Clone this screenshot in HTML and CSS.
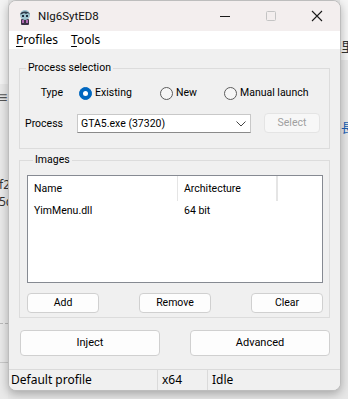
FILE: index.html
```html
<!DOCTYPE html>
<html>
<head>
<meta charset="utf-8">
<link rel="stylesheet" href="styles.css">
</head>
<body>
<div class="desktop">
  <div class="behind behind-left">
    <span class="bg-menu">≡</span>
    <span class="bg-text bg-f2">f2</span>
    <span class="bg-text bg-5c">5c</span>
    <span class="bg-dash"></span>
    <span class="bg-line"></span>
  </div>
  <div class="behind behind-right">
    <span class="bg-cjk bg-cjk1">里</span>
    <span class="bg-cjk bg-cjk2">長</span>
  </div>

  <div class="window">
    <div class="titlebar">
      <svg class="app-icon" width="16" height="16" viewBox="0 0 16 16">
        <rect x="4" y="10" width="8" height="6" rx="1" fill="#3b3346"/>
        <rect x="5" y="11" width="2" height="3" fill="#b06ab3"/>
        <rect x="9" y="11" width="2" height="3" fill="#b06ab3"/>
        <circle cx="8" cy="6" r="5" fill="#9ec4cf"/>
        <path d="M3.2 5.5 C3.5 1.5 12.5 1.5 12.8 5.5 L11 4 L9 5 L7 4 L5 5 Z" fill="#2e3a4a"/>
        <rect x="5" y="6" width="2" height="2" fill="#203040"/>
        <rect x="9" y="6" width="2" height="2" fill="#203040"/>
      </svg>
      <span class="title">NIg6SytED8</span>
      <div class="controls">
        <span class="ctl">
          <svg width="12" height="12" viewBox="0 0 12 12"><path d="M1 6.5 H11" stroke="#1a1a1a" stroke-width="1"/></svg>
        </span>
        <span class="ctl">
          <svg width="12" height="12" viewBox="0 0 12 12"><rect x="1.5" y="1.5" width="9" height="9" rx="1" fill="none" stroke="#c4c4c4" stroke-width="1"/></svg>
        </span>
        <span class="ctl">
          <svg width="12" height="12" viewBox="0 0 12 12"><path d="M1 1 L11 11 M11 1 L1 11" stroke="#1a1a1a" stroke-width="1.1"/></svg>
        </span>
      </div>
    </div>

    <div class="menubar">
      <span class="menu"><u>P</u>rofiles</span>
      <span class="menu"><u>T</u>ools</span>
    </div>

    <div class="client">
      <fieldset class="group group-process">
        <legend>Process selection</legend>
        <div class="type-row">
          <span class="label">Type</span>
          <span class="radio opt1"><span class="radio-dot checked"></span>Existing</span>
          <span class="radio opt2"><span class="radio-dot"></span>New</span>
          <span class="radio opt3"><span class="radio-dot"></span>Manual launch</span>
        </div>
        <div class="process-row">
          <span class="label">Process</span>
          <div class="combo">
            <span class="combo-text">GTA5.exe (37320)</span>
            <svg class="chevron" width="10" height="6" viewBox="0 0 10 6"><path d="M0.5 0.5 L5 5 L9.5 0.5" fill="none" stroke="#444" stroke-width="1"/></svg>
          </div>
          <span class="btn btn-disabled btn-select">Select</span>
        </div>
      </fieldset>

      <fieldset class="group group-images">
        <legend>Images</legend>
        <div class="listview">
          <div class="lv-header">
            <span class="col col-name">Name</span>
            <span class="col col-arch">Architecture</span>
            <span class="col col-rest"></span>
          </div>
          <div class="lv-row">
            <span class="col col-name">YimMenu.dll</span>
            <span class="col col-arch">64 bit</span>
          </div>
        </div>
        <div class="btn-row">
          <span class="btn btn-small">Add</span>
          <span class="btn btn-small">Remove</span>
          <span class="btn btn-small">Clear</span>
        </div>
      </fieldset>

      <div class="main-buttons">
        <span class="btn btn-large">Inject</span>
        <span class="btn btn-large">Advanced</span>
      </div>
    </div>

    <div class="statusbar">
      <span class="sb sb-profile">Default profile</span>
      <span class="sb sb-arch">x64</span>
      <span class="sb sb-state">Idle</span>
    </div>
  </div>
</div>
</body>
</html>
```

FILE: styles.css
```css
html, body {
  margin: 0;
  padding: 0;
}

body {
  background: #e4e4e4;
  font-family: "Noto Sans", "Open Sans", sans-serif;
  font-size: 12px;
  color: #000;
}

.desktop {
  position: relative;
  width: 348px;
  height: 399px;
  overflow: hidden;
  background: #e6e6e6;
}

/* ---- windows behind ---- */
.behind {
  position: absolute;
  top: 0;
  height: 399px;
}

.behind-left {
  left: 0;
  width: 8px;
  background: linear-gradient(#f3f3f3 0 84px, #e9e9e9 84px 100%);
}

.behind-right {
  left: 340px;
  width: 8px;
  background: linear-gradient(#f5f5f5 0 60px, #e7e7e7 60px 100%);
}

.bg-menu {
  position: absolute;
  left: -2px;
  top: 86px;
  font-size: 16px;
  color: #555;
}

.bg-text {
  position: absolute;
  left: -1px;
  font-size: 12px;
  color: #333;
}

.bg-f2 { top: 176px; }
.bg-5c { top: 193px; }

.bg-dash {
  position: absolute;
  left: 0;
  top: 323px;
  width: 8px;
  border-top: 1px dashed #b8b8b8;
}

.bg-line {
  position: absolute;
  left: 0;
  top: 362px;
  width: 8px;
  border-top: 1px solid #c8c8c8;
}

.bg-cjk {
  position: absolute;
  left: 1px;
  font-family: "Noto Sans CJK SC", sans-serif;
  font-size: 13px;
}

.bg-cjk1 { top: 36px; color: #333; }
.bg-cjk2 { top: 117px; color: #1a5fb4; }

/* ---- main window ---- */
.window {
  position: absolute;
  left: 8px;
  top: 0;
  width: 331px;
  height: 389px;
  border: 1px solid #bdbdbd;
  border-radius: 8px;
  overflow: hidden;
  background: #f0f0f0;
  box-shadow: 0 3px 10px rgba(0, 0, 0, 0.28);
  display: flex;
  flex-direction: column;
}

.titlebar {
  height: 30px;
  background: #f3eeee;
  display: flex;
  align-items: center;
  flex-shrink: 0;
}

.app-icon {
  margin-left: 8px;
  margin-top: 1px;
  flex-shrink: 0;
}

.title {
  margin-left: 5px;
  font-family: Roboto, "Noto Sans", sans-serif;
  font-size: 11.5px;
  line-height: 16px;
  color: #111;
}

.controls {
  margin-left: auto;
  display: flex;
  height: 30px;
}

.ctl {
  width: 46px;
  height: 30px;
  display: flex;
  align-items: center;
  justify-content: center;
}

.menubar {
  height: 18px;
  background: #ffffff;
  display: flex;
  align-items: center;
  flex-shrink: 0;
}

.menu {
  line-height: 16px;
  margin-left: 7px;
  padding-right: 6px;
}

.menu u {
  text-decoration-thickness: 1px;
  text-underline-offset: 2px;
}

.client {
  height: 320px;
  padding: 11px 9px 0 10px;
  box-sizing: border-box;
  flex-shrink: 0;
  font-family: Roboto, "Noto Sans", sans-serif;
  font-size: 10.5px;
  color: #000;
}

/* ---- group boxes ---- */
.group {
  margin: 0;
  padding: 0;
  min-width: 0;
  width: 311px;
  box-sizing: border-box;
  border: 1px solid #dcdcdc;
}

.group legend {
  margin-left: 6px;
  padding: 0 2px;
  line-height: 16px;
  font-size: 10.5px;
}

.group-process {
  padding-bottom: 15px;
}

.label {
  width: 43px;
  text-align: right;
  flex-shrink: 0;
}

.type-row {
  margin-top: 9px;
  height: 16px;
  display: flex;
  align-items: center;
  line-height: 16px;
}

.radio {
  display: flex;
  align-items: center;
  flex-shrink: 0;
}

.opt1 { margin-left: 16px; width: 81px; }
.opt2 { width: 64px; }

.radio-dot {
  width: 11px;
  height: 11px;
  border-radius: 50%;
  border: 1px solid #5c5c5c;
  background: #f6f6f6;
  margin-right: 3px;
  flex-shrink: 0;
  box-sizing: content-box;
  position: relative;
}

.radio-dot.checked {
  border-color: #0067c0;
  background: #0067c0;
}

.radio-dot.checked::after {
  content: "";
  position: absolute;
  left: 3px;
  top: 3px;
  width: 5px;
  height: 5px;
  border-radius: 50%;
  background: #fff;
}

.process-row {
  margin-top: 12px;
  height: 20px;
  display: flex;
  align-items: center;
}

.combo {
  margin-left: 14px;
  width: 174px;
  height: 19px;
  box-sizing: border-box;
  border: 1px solid #c8c8c8;
  border-bottom-color: #8a8a8a;
  background: #fff;
  display: flex;
  align-items: center;
  padding-left: 3px;
  padding-right: 4px;
  align-self: flex-start;
  margin-top: 1px;
}

.combo-text {
  line-height: 16px;
}

.chevron {
  margin-left: auto;
}

.btn {
  box-sizing: border-box;
  border: 1px solid #d0d0d0;
  border-radius: 4px;
  background: #fdfdfd;
  display: flex;
  align-items: center;
  justify-content: center;
  line-height: 16px;
}

.btn-select {
  margin-left: 13px;
  width: 56px;
  height: 20px;
  align-self: flex-start;
}

.btn-disabled {
  background: #f7f7f7;
  border-color: #e4e4e4;
  color: #a0a0a0;
}

/* ---- images group ---- */
.group-images {
  margin-top: 3px;
  padding: 0 6px 4px 7px;
}

.listview {
  margin-top: 7px;
  height: 108px;
  box-sizing: border-box;
  border: 1px solid #868a92;
  background: #fff;
}

.lv-header {
  height: 25px;
  display: flex;
}

.lv-header .col {
  border-right: 1px solid #e5e5e5;
}

.col {
  box-sizing: border-box;
  padding-left: 6px;
  display: flex;
  align-items: center;
  line-height: 16px;
}

.col-name { width: 150px; }
.col-arch { width: 99px; }
.col-rest { width: 0; padding: 0; }

.lv-row {
  height: 20px;
  display: flex;
}

.lv-row .col {
  border-right: 1px solid transparent;
}

.btn-row {
  margin-top: 10px;
  display: flex;
  justify-content: space-between;
}

.btn-small {
  width: 72px;
  height: 20px;
}

.main-buttons {
  margin-top: 12px;
  padding: 0 0 0 1px;
  width: 311px;
  box-sizing: border-box;
  display: flex;
  justify-content: space-between;
}

.btn-large {
  width: 140px;
  height: 26px;
  font-size: 11px;
}

/* ---- status bar ---- */
.statusbar {
  height: 20px;
  border-top: 1px solid #dadada;
  display: flex;
  align-items: stretch;
  background: #f0f0f0;
  flex-shrink: 0;
}

.sb {
  display: flex;
  align-items: center;
  line-height: 16px;
  box-sizing: border-box;
}

.sb-profile {
  width: 149px;
  padding-left: 2px;
  border-right: 1px solid #dadada;
}

.sb-arch {
  width: 50px;
  padding-left: 4px;
  border-right: 1px solid #dadada;
}

.sb-state {
  padding-left: 4px;
}
```
